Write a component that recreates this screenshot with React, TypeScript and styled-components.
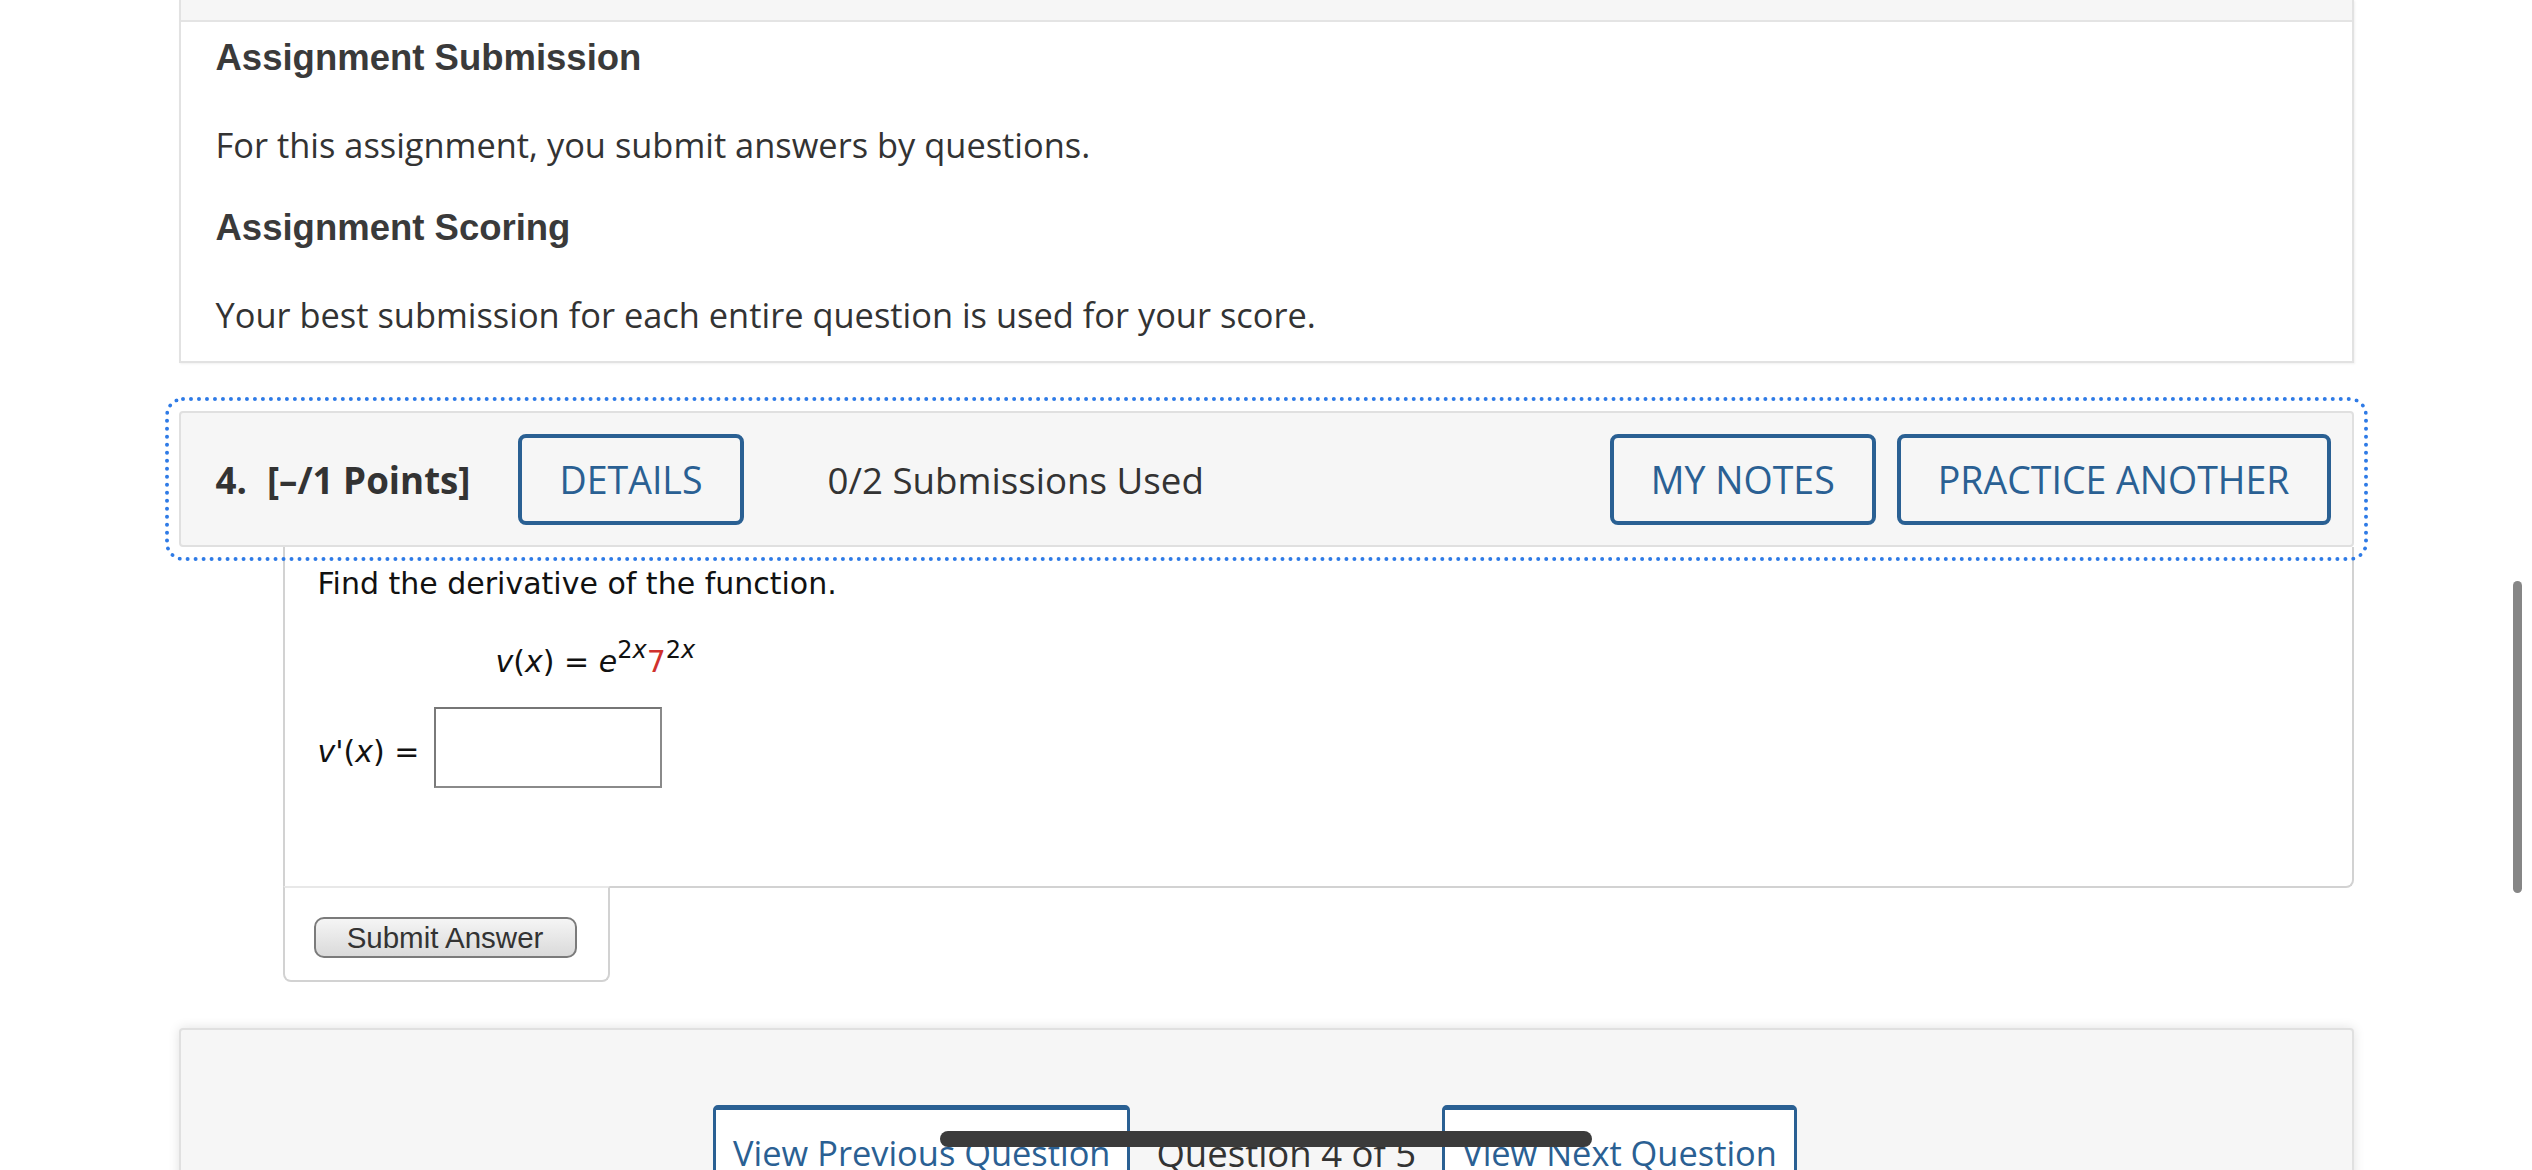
import styled, { createGlobalStyle } from "styled-components";

const GlobalStyle = createGlobalStyle`
  html, body {
    margin: 0;
    padding: 0;
    background: #fff;
    overflow: hidden;
  }
  body {
    font-family: "Open Sans", "Liberation Sans", sans-serif;
    color: #333;
  }
  * {
    box-sizing: border-box;
  }
`;

const BLUE = "#2a6093";

export default function App() {
  return (
    <>
      <GlobalStyle />
      <Page>
        <InfoCard>
          <InfoStrip />
          <InfoBody>
            <InfoTitle>Assignment Submission</InfoTitle>
            <InfoText>For this assignment, you submit answers by questions.</InfoText>
            <InfoTitle>Assignment Scoring</InfoTitle>
            <InfoText>Your best submission for each entire question is used for your score.</InfoText>
          </InfoBody>
        </InfoCard>

        <Question>
          <QHeader>
            <QNum>4.</QNum>
            <QPoints>[–/1 Points]</QPoints>
            <OutlineButton>DETAILS</OutlineButton>
            <Submissions>0/2 Submissions Used</Submissions>
            <Spacer />
            <OutlineButton>MY NOTES</OutlineButton>
            <OutlineButton>PRACTICE ANOTHER</OutlineButton>
          </QHeader>

          <QBody>
            <Prompt>Find the derivative of the function.</Prompt>
            <Formula>
              <Var>v</Var>(<Var>x</Var>) = <Var>e</Var>
              <Sup>
                2<Var>x</Var>
              </Sup>
              <Red>7</Red>
              <Sup>
                2<Var>x</Var>
              </Sup>
            </Formula>
            <AnswerRow>
              <AnswerLabel>
                <Var>v'</Var>(<Var>x</Var>) =
              </AnswerLabel>
              <AnswerInput type="text" />
            </AnswerRow>
          </QBody>

          <SubmitTab>
            <SubmitButton>Submit Answer</SubmitButton>
          </SubmitTab>
        </Question>

        <NavCard>
          <NavButton>View Previous Question</NavButton>
          <NavLabel>Question 4 of 5</NavLabel>
          <NavButton>View Next Question</NavButton>
        </NavCard>
      </Page>
      <ScrollThumb />
      <HomeBar />
    </>
  );
}

const Page = styled.div`
  width: 2175px;
  margin: 0 auto;
`;

const InfoCard = styled.section`
  background: #fff;
  border: 2px solid #e2e2e2;
  border-top: none;
  box-shadow: 1px 1px 2px rgba(0, 0, 0, 0.06);
`;

const InfoStrip = styled.div`
  height: 22px;
  background: #f6f6f6;
  border-bottom: 2px solid #e4e4e4;
`;

const InfoBody = styled.div`
  padding: 14px 35px 22px;
`;

const InfoTitle = styled.h3`
  margin: 0 0 41px;
  font-family: "Liberation Sans", Arial, sans-serif;
  font-weight: 700;
  font-size: 36.5px;
  line-height: 44px;
  color: #3a3a3a;
`;

const InfoText = styled.p`
  margin: 0 0 37px;
  font-size: 34.4px;
  line-height: 48px;
  color: #333;

  &:last-child {
    margin-bottom: 0;
  }
`;

const Question = styled.section`
  margin-top: 48px;
`;

const QHeader = styled.div`
  display: flex;
  align-items: center;
  background: #f6f6f6;
  border: 2px solid #e0e0e0;
  border-radius: 4px;
  padding: 21px 21px 20px 35px;
  outline: 4px dotted #2f7be6;
  outline-offset: 10px;
  color: #333;
  font-size: 36.7px;
`;

const QNum = styled.span`
  font-weight: 700;
  margin-right: 20px;
`;

const QPoints = styled.span`
  font-weight: 700;
  margin-right: 48px;
`;

const OutlineButton = styled.button`
  font-family: "Open Sans", sans-serif;
  font-size: 37.5px;
  line-height: 47px;
  color: ${BLUE};
  background: #f6f6f6;
  border: 4px solid ${BLUE};
  border-radius: 8px;
  padding: 18px 37px;
  cursor: pointer;

  & + & {
    margin-left: 21px;
  }
`;

const Submissions = styled.span`
  margin-left: 84px;
`;

const Spacer = styled.div`
  flex: 1;
`;

const QBody = styled.div`
  margin-left: 104px;
  background: #fff;
  border: 2px solid #d2d2d2;
  border-top: none;
  border-radius: 0 0 8px 0;
  padding: 19px 33px 98px;
  font-family: "DejaVu Sans", Verdana, sans-serif;
  font-size: 30px;
  color: #111;
`;

const Prompt = styled.p`
  margin: 0;
  line-height: 36px;
  font-size: 30px;
`;

const Formula = styled.div`
  margin-top: 35px;
  padding-left: 178px;
  line-height: 50px;
  height: 50px;
  white-space: pre;
`;

const Var = styled.i`
  font-style: italic;
`;

const Sup = styled.sup`
  font-size: 24px;
  line-height: 0;
  vertical-align: 14px;
`;

const Red = styled.span`
  color: #d0312d;
`;

const AnswerRow = styled.div`
  display: flex;
  align-items: center;
  gap: 15px;
  margin-top: 20px;
`;

const AnswerLabel = styled.span`
  line-height: 40px;
  margin-top: 8px;
`;

const AnswerInput = styled.input`
  width: 228px;
  height: 81px;
  border: 2px solid #8a8a8a;
  border-top-color: #767676;
  border-left-color: #7a7a7a;
  background: #fff;
`;

const SubmitTab = styled.div`
  margin-left: 104px;
  margin-top: -2px;
  width: 327px;
  background: #fff;
  border: 2px solid #d2d2d2;
  border-top-color: #e8e8e8;
  border-radius: 0 0 8px 8px;
  padding: 29px 0 22px 29px;
`;

const SubmitButton = styled.button`
  display: block;
  width: 263px;
  height: 41px;
  padding: 0;
  font-family: "Liberation Sans", Arial, sans-serif;
  font-size: 29.5px;
  line-height: 35px;
  color: #333;
  background: linear-gradient(#f5f5f5, #dadada);
  border: 2px solid #7b7b7b;
  border-radius: 10px;
`;

const NavCard = styled.nav`
  margin-top: 46px;
  display: flex;
  justify-content: center;
  align-items: flex-start;
  gap: 26px;
  background: #f6f6f6;
  border: 2px solid #e0e0e0;
  border-radius: 4px;
  box-shadow: 0 0 12px rgba(0, 0, 0, 0.12);
  padding: 75px 22px 60px 0;
`;

const NavButton = styled.button`
  font-family: "Open Sans", sans-serif;
  font-size: 34.4px;
  line-height: 46px;
  color: ${BLUE};
  background: #fff;
  border: 3px solid ${BLUE};
  border-top-width: 5px;
  border-radius: 5px 5px 0 0;
  padding: 20px 17px;
`;

const NavLabel = styled.span`
  margin-top: 25px;
  font-size: 36.5px;
  line-height: 46px;
  color: #333;
`;

const ScrollThumb = styled.div`
  position: fixed;
  left: 2513px;
  top: 581px;
  width: 9px;
  height: 312px;
  border-radius: 5px;
  background: #868686;
`;

const HomeBar = styled.div`
  position: fixed;
  left: 50%;
  top: 1131px;
  transform: translateX(-50%);
  width: 652px;
  height: 16px;
  border-radius: 8px;
  background: #3b3b3b;
`;
